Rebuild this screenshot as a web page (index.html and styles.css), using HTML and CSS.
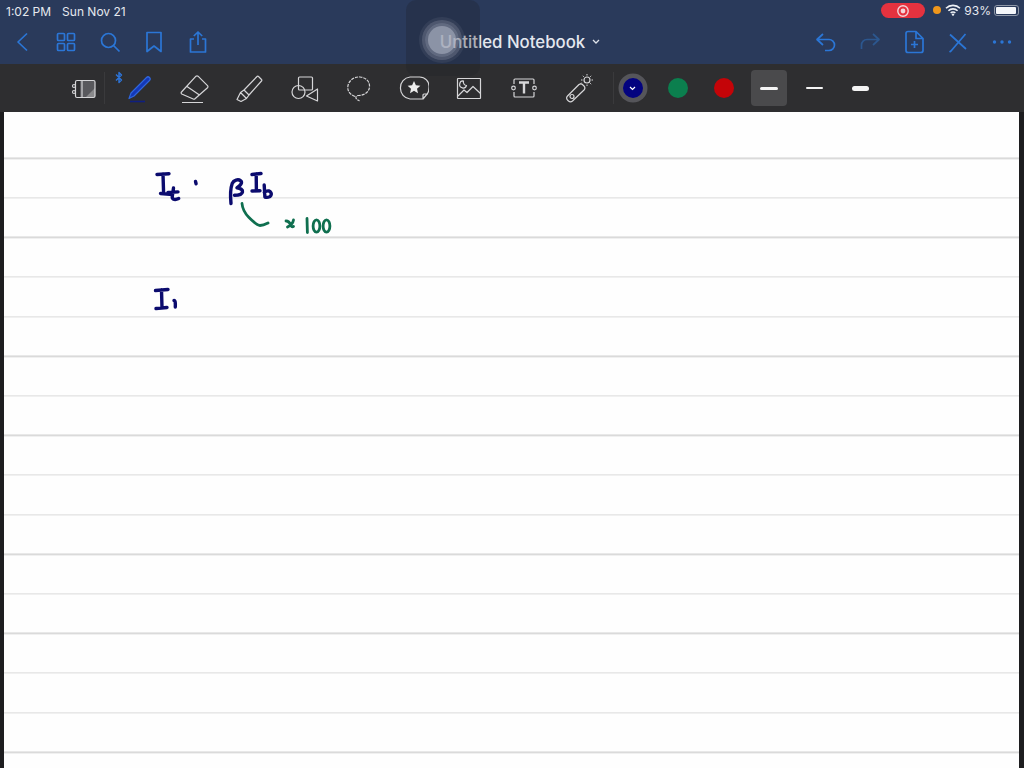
FILE: index.html
```html
<!DOCTYPE html>
<html lang="en">
<head>
<meta charset="utf-8">
<title>Untitled Notebook</title>
<link rel="stylesheet" href="styles.css">
</head>
<body>
<div class="app">
  <header class="top">
    <div class="status">
      <div class="status-left"><span>1:02 PM</span><span>Sun Nov 21</span></div>
      <div class="status-right">
        <span class="rec"><svg width="14" height="14" viewBox="0 0 14 14"><circle cx="7" cy="7" r="5.2" fill="none" stroke="#f4d6da" stroke-width="1.4"/><circle cx="7" cy="7" r="2.4" fill="#f4d6da"/></svg></span>
        <span class="dot"></span>
        <svg class="wifi" width="16" height="12" viewBox="0 0 16 12"><path d="M1 4.2a10 10 0 0 1 14 0M3.4 6.7a6.6 6.6 0 0 1 9.2 0M5.7 9a3.2 3.2 0 0 1 4.6 0" fill="none" stroke="#eef1f6" stroke-width="1.6"/><circle cx="8" cy="10.6" r="1.2" fill="#eef1f6"/></svg>
        <span class="pct">93%</span>
        <span class="batt"><span class="batt-fill"></span></span>
      </div>
    </div>
    <nav class="nav">
      <div class="nav-group">
        <button class="nbtn"><svg width="24" height="24" viewBox="0 0 24 24"><path d="M17 3.5 8 12l9 8.500"/></svg></button>
        <button class="nbtn"><svg width="24" height="24" viewBox="0 0 24 24"><rect x="3.500" y="3.500" width="7" height="7" rx="1"/><rect x="13.500" y="3.500" width="7" height="7" rx="1"/><rect x="3.500" y="13.500" width="7" height="7" rx="1"/><rect x="13.500" y="13.500" width="7" height="7" rx="1"/></svg></button>
        <button class="nbtn"><svg width="24" height="24" viewBox="0 0 24 24"><circle cx="10.500" cy="10.500" r="7"/><path d="m15.500 15.500 6 6"/></svg></button>
        <button class="nbtn"><svg width="24" height="24" viewBox="0 0 24 24"><path d="M5 2.500h14v19l-7-5.500-7 5.500z"/></svg></button>
        <button class="nbtn"><svg width="24" height="24" viewBox="0 0 24 24"><path d="M8 9H4.500v13h15V9H16M12 15V2M7.800 6 12 2l4.200 4"/></svg></button>
      </div>
      <div class="title"><span>Untitled Notebook</span><svg width="8" height="6" viewBox="0 0 8 6"><path d="m1 1 3 3 3-3" fill="none" stroke="#dfe3ea" stroke-width="1.300"/></svg></div>
      <div class="nav-group">
        <button class="nbtn"><svg width="24" height="24" viewBox="0 0 24 24"><path d="M9 4 3 9.500l6 5.500M3 9.500h12a5.500 5.500 0 0 1 0 11h-4"/></svg></button>
        <button class="nbtn dim"><svg width="24" height="24" viewBox="0 0 24 24"><path d="m15 4 6 5.500-6 5.500M21 9.500H9a5.500 5.500 0 0 0-5.500 5.500v4"/></svg></button>
        <button class="nbtn"><svg width="24" height="24" viewBox="0 0 24 24"><path d="M4 3.500a2 2 0 0 1 2-2h8l7 7v12a2 2 0 0 1-2 2H6a2 2 0 0 1-2-2zM14 1.500v7h7M12.500 11v7M9 14.500h7"/></svg></button>
        <button class="nbtn"><svg width="24" height="24" viewBox="0 0 24 24"><path d="M4 4.500 20 19M19.500 4 5 21l-1.500 1"/></svg></button>
        <button class="nbtn"><svg width="24" height="24" viewBox="0 0 24 24"><circle cx="4.500" cy="12" r="1.700" class="solid"/><circle cx="12" cy="12" r="1.700" class="solid"/><circle cx="19.500" cy="12" r="1.700" class="solid"/></svg></button>
      </div>
    </nav>
  </header>

  <div class="tools">
    <div class="tool-group">
      <span class="tool first"><svg width="30" height="30" viewBox="0 0 30 30"><rect x="11" y="8" width="15" height="16" fill="#59595d" stroke="none"/><path class="shade" d="M26 15v9H17z"/><rect x="6.500" y="7.500" width="19.500" height="17" rx="1.500"/><path d="M13 7.500v17"/><circle cx="5" cy="13" r="1.500"/><circle cx="5" cy="19" r="1.500"/></svg></span>
      <span class="tool pen">
        <svg class="bt" width="8" height="13" viewBox="0 0 8 13"><path d="M1 3.500 6.500 9 4 11.500v-10L6.500 4 1 9.500" fill="none" stroke="#2d74d8" stroke-width="1.400"/></svg>
        <svg width="30" height="30" viewBox="0 0 30 30"><path d="M5 25.500 7 20 22.500 4.500a2 2 0 0 1 3 3L10 23z" fill="#1438b8" stroke="#2f66dc" stroke-width="1.200"/><path d="M6 28.500h15" stroke="#0f1f80" stroke-width="1.600"/></svg>
      </span>
      <span class="tool"><svg width="30" height="30" viewBox="0 0 30 30"><path d="M2.500 19 17 3.200a1.500 1.500 0 0 1 2 0l9.500 9.500a1.500 1.500 0 0 1 0 2L16 25.800a1.500 1.500 0 0 1-1.800.2l-11.500-5a1.300 1.300 0 0 1-.2-2zM8 13.500 20.500 22M3 29.500h21"/></svg></span>
      <span class="tool"><svg width="30" height="30" viewBox="0 0 30 30"><path d="M10 17 23 3.500a1 1 0 0 1 1.500 0l3 3a1 1 0 0 1 0 1.500L15 22zM6.500 19.500 10 17l5 5-2.500 3.500zM6.500 19.500 3 26.500l4 2 5.500-3"/></svg></span>
      <span class="tool"><svg width="30" height="30" viewBox="0 0 30 30"><rect x="9.500" y="4" width="14" height="13" rx="1"/><circle cx="9.500" cy="19" r="6.500"/><path d="M28.500 16v12l-11-5z"/></svg></span>
      <span class="tool"><svg width="30" height="30" viewBox="0 0 30 30"><path d="M11 23.500C5.500 21.500 3 17.500 4 12.500 5.500 6.500 11 3.500 16 4c6 .5 10 4.500 9.500 10-.5 5-5 8.500-11 8.500-2 0-3 1-2.500 2.500s2 2 3.500 3" stroke-dasharray="3.200 1"/></svg></span>
      <span class="tool"><svg width="30" height="30" viewBox="0 0 30 30"><path d="M11 4h9a9.500 9.500 0 0 1 10 10.500c0 2.500-.5 4.500-1.500 6L24 26H11A10.500 10.500 0 0 1 1.500 15 10.500 10.500 0 0 1 11 4zM24 26v-4a1 1 0 0 1 1-1h4"/><path class="solid" d="m15 8 1.900 4.200 4.500.5-3.400 3 1 4.500-4-2.400-4 2.400 1-4.500-3.400-3 4.500-.5z"/></svg></span>
      <span class="tool"><svg width="30" height="30" viewBox="0 0 30 30"><rect x="3.500" y="5.500" width="23" height="20" rx=".5"/><path d="m4 23 6-6 3 2.500 6-6 7.500 7M9.500 8a3.500 3.500 0 1 0 3 4.500A3.500 3.500 0 0 1 9.500 8z"/></svg></span>
      <span class="tool"><svg width="30" height="30" viewBox="0 0 30 30"><path d="M5 11V7a1 1 0 0 1 1-1h18a1 1 0 0 1 1 1v4M5 19v4a1 1 0 0 0 1 1h18a1 1 0 0 0 1-1v-4"/><circle cx="4.500" cy="15" r="1.800"/><circle cx="25.500" cy="15" r="1.800"/><path d="M10 9.500h10M15 9.500v11" stroke-width="2.400"/></svg></span>
      <span class="tool"><svg width="30" height="30" viewBox="0 0 30 30"><path d="M3.500 23 15 11.500a3 3 0 0 1 4 .5l1 1a3 3 0 0 1 0 4L8.500 28a3 3 0 0 1-4 0l-1-1a3 3 0 0 1 0-4z"/><circle cx="8" cy="23.500" r="2"/><circle cx="23" cy="7" r="3"/><path d="M23 1v1.500M23 11.500V13M17 7h1.500M27.500 7H29M18.800 2.800l1 1M26.200 10.200l1 1M27.200 2.800l-1 1M16.500 10.500l1-.5" stroke-width="1"/></svg></span>
    </div>
    <div class="sep"></div>
    <div class="opt-group">
      <span class="opt"><span class="swatch navy"><svg width="7" height="5" viewBox="0 0 7 5"><path d="m1 1 2.500 2.500L6 1" fill="none" stroke="#fff" stroke-width="1.200"/></svg></span></span>
      <span class="opt"><span class="swatch green"></span></span>
      <span class="opt"><span class="swatch red"></span></span>
      <span class="opt active"><span class="stroke s-mid"></span></span>
      <span class="opt"><span class="stroke s-thin"></span></span>
      <span class="opt"><span class="stroke s-thick"></span></span>
    </div>
  </div>

  <main class="sheet">
    <div class="paper">
      <svg class="ink" width="1015" height="656" viewBox="4 112 1015 656">
        <g class="navy-ink">
          <path d="M157 174.500l12-.8M163 174l.6 19M160.500 193.500l9 .7M173.500 188l-1.300 9c0 2.500 3 3.200 6.500 1.500M168 192.500l10-.6"/>
          <path d="M195.500 181.500l.6 2.300" stroke-width="3.800"/>
          <path d="M231 203.500c-.8-8-.6-15 1.200-20 1.500-3.500 6-4.700 8.500-2.700 2 1.600-.2 5-3.700 7 3.500.5 6 2 5.500 4-.5 2.500-4 3.500-8 3.500"/>
          <path d="M252 174.500l9-1M256.200 174l.2 16.500M252 191l8-.2M264.200 185l.7 12c2 .6 5 .4 6-1.500s-.2-4-2-4.500c-1.600-.3-3.200.3-4.500 1.500"/>
          <path d="M155.500 290.500l12.500-1M161.500 290l.5 17.500M156 308.500l11-1M174 300.500c1.200 0 1.500 2 1.300 6.500"/>
        </g>
        <g class="green-ink">
          <path d="M242 203.500c.5 6 3 10 7 14 4 4 8 8 11 8 3 0 6-1.500 8-2.500"/>
          <path d="M286 221c2.500 0 4 2 5 4.500.6 1.200 1.500 1.500 2.500 1M293.500 220c-.5 3-3 5.500-6 7"/>
          <path d="M307 218.500l.4 14"/>
          <ellipse cx="316.500" cy="226" rx="3.400" ry="6.200"/>
          <ellipse cx="326.500" cy="226" rx="3.400" ry="6.200"/>
        </g>
      </svg>
    </div>
  </main>

  <div class="recording" aria-hidden="true"><span class="halo"><span class="core"></span></span></div>
</div>
</body>
</html>
```
FILE: styles.css
```css
* { box-sizing: border-box; }
html, body { margin: 0; padding: 0; }
body { width: 1024px; height: 768px; overflow: hidden; background: #1d1d1f; font-family: Inter, "Liberation Sans", sans-serif; }
.app { position: relative; width: 1024px; height: 768px; display: flex; flex-direction: column; }

.top { height: 64px; background: #2a3a5b; flex: none; display: flex; flex-direction: column; }
.status { height: 22px; display: flex; justify-content: space-between; align-items: center; padding: 0 5px 0 6px; color: #e6e9ef; font-size: 12px; }
.status-left { display: flex; gap: 11px; }
.status-right { display: flex; align-items: center; margin-top: -2px; }
.rec { width: 44px; height: 15px; border-radius: 8px; background: #e5323f; display: flex; align-items: center; justify-content: center; margin-top: 1px; }
.dot { width: 8px; height: 8px; border-radius: 50%; background: #f0971c; margin-left: 8px; }
.wifi { margin-left: 4px; }
.pct { margin-left: 3px; font-size: 12px; }
.batt { width: 25px; height: 11px; border: 1px solid #8e97a8; border-radius: 3px; padding: 1px; margin-left: 3px; display: flex; }
.batt-fill { width: 93%; background: #f4f6fa; border-radius: 1px; }

.nav { position: relative; height: 42px; display: flex; justify-content: space-between; align-items: center; padding-bottom: 3px; }
.nav-group { display: flex; }
.nbtn { width: 44px; height: 32px; padding: 0; background: none; border: 0; display: flex; align-items: center; justify-content: center; }
.nbtn svg { fill: none; stroke: #2b76d6; stroke-width: 1.700; stroke-linejoin: round; }
.nbtn .solid { fill: #2b76d6; stroke: none; }
.nbtn.dim svg { stroke: #2c578f; }
.title { display: flex; align-items: center; gap: 7px; color: #e4e7ee; font-size: 16.800px; font-weight: 500; margin-left: 16px; }

.tools { height: 48px; background: #2e2e30; flex: none; display: flex; align-items: center; padding-left: 56px; position: relative; }
.tool-group { display: flex; }
.tool { position: relative; width: 55px; height: 36px; display: flex; align-items: center; justify-content: center; }
.tool svg { fill: none; stroke: #d6d6d8; stroke-width: 1.200; stroke-linejoin: round; }
.tool .solid { fill: #eeeeee; stroke: none; }
.tool .shade { fill: #8a8a8c; stroke: none; }
.first::after { content: ""; position: absolute; left: 48px; top: 2px; width: 1px; height: 32px; background: #3a3a3c; }
.pen svg { stroke: none; }
.bt { position: absolute; left: 4px; top: 1px; }
.sep { width: 1px; height: 32px; background: #3a3a3c; margin-left: 7px; }
.opt-group { display: flex; margin-left: -4px; }
.opt { width: 45.500px; height: 36px; display: flex; align-items: center; justify-content: center; border-radius: 4px; }
.opt.active { background: #4a4a4c; width: 36px; margin: 0 4.750px; }
.swatch { width: 20px; height: 20px; border-radius: 50%; display: flex; align-items: center; justify-content: center; }
.navy { background: #03037f; box-shadow: 0 0 0 4.500px #55555a; }
.green { background: #0b7f4e; }
.red { background: #c40408; }
.stroke { display: block; background: #f4f4f4; border-radius: 2px; }
.s-mid { width: 18px; height: 3px; }
.s-thin { width: 17px; height: 2px; }
.s-thick { width: 17px; height: 5px; border-radius: 3px; }

.sheet { flex: 1; padding: 0 5px 0 4px; }
.paper { position: relative; height: 100%; overflow: hidden; background-color: #fefefe; background-image: repeating-linear-gradient(to bottom, transparent 0, transparent 38.300px, #dadada 38.300px, #dadada 39.600px); background-position: 0 7.400px; }
.ink { position: absolute; left: 0; top: 0; display: block; filter: blur(.35px); }
.ink path, .ink ellipse { fill: none; stroke-linecap: round; stroke-linejoin: round; }
.navy-ink path { stroke: #0b0b6e; stroke-width: 3.400; }
.green-ink path, .green-ink ellipse { stroke: #0f6f4f; stroke-width: 2.800; }

.recording { position: absolute; left: 406px; top: 0; width: 74px; height: 76px; border-radius: 10px; background: rgba(30, 32, 40, .28); display: flex; align-items: center; justify-content: center; padding-top: 4px; padding-right: 2px; }
.halo { width: 34px; height: 34px; border-radius: 50%; background: rgba(170, 176, 192, .45); box-shadow: 0 0 0 3px rgba(150, 156, 172, .28), 0 0 0 6px rgba(150, 156, 172, .12); display: flex; align-items: center; justify-content: center; }
.core { width: 28px; height: 28px; border-radius: 50%; background: rgba(175, 180, 196, .55); }
```
